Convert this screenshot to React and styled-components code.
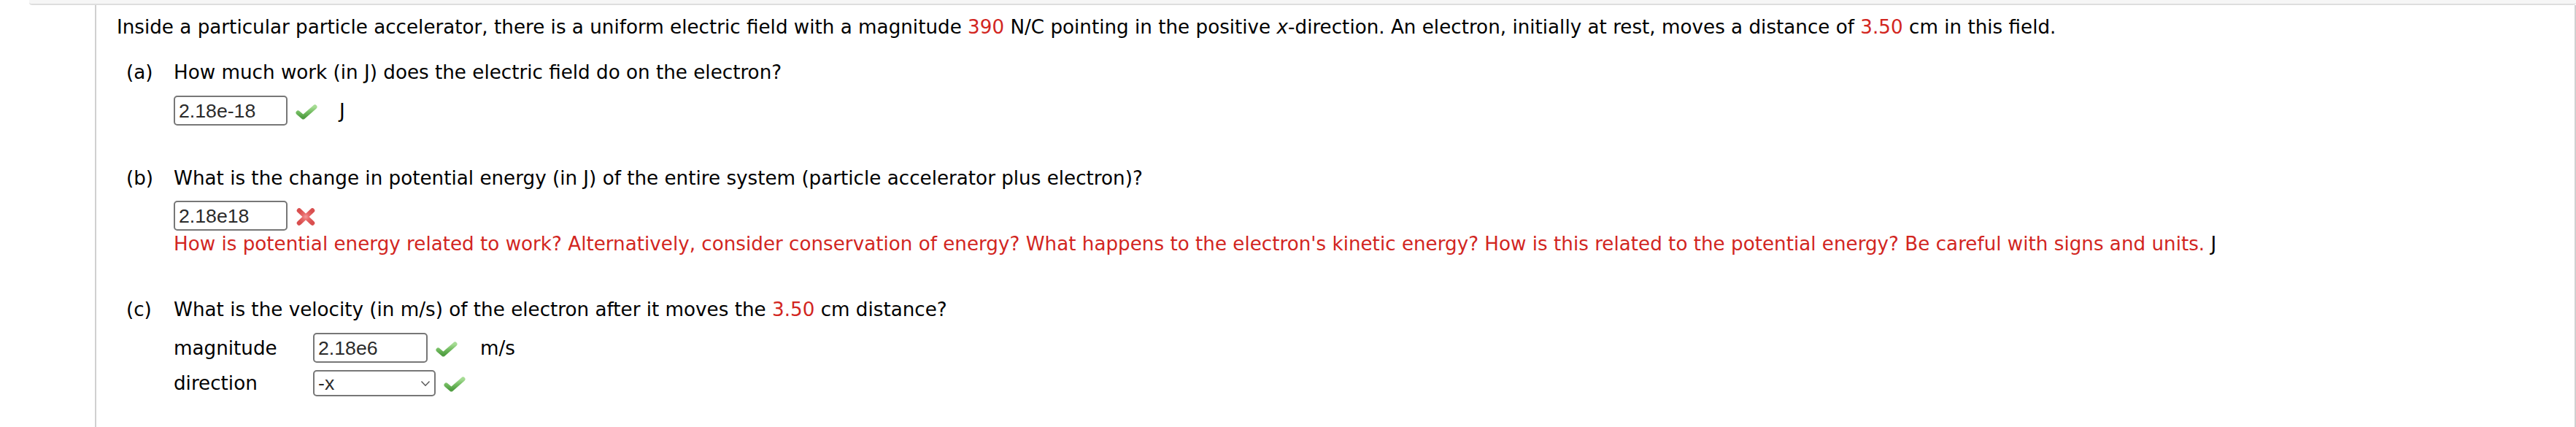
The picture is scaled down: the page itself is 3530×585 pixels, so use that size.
import React from "react";
import styled, { createGlobalStyle } from "styled-components";

const Global = createGlobalStyle`
  html, body { margin: 0; padding: 0; background: #ffffff; }
  body {
    font-family: "DejaVu Sans", Verdana, "Liberation Sans", sans-serif;
    font-size: 26.2px;
    color: #000000;
  }
`;

const Page = styled.div`
  display: flex;
  flex-direction: column;
  min-height: 100vh;
`;

const TopStrip = styled.div`
  margin-left: 40px;
  height: 5px;
  background: #f6f6f6;
  border-bottom: 2px solid #dedede;
  border-radius: 0 0 4px 4px;
`;

const Panel = styled.main`
  flex: 1;
  margin-left: 130px;
  border-left: 2px solid #d0d0d0;
  border-right: 2px solid #d0d0d0;
  padding: 12px 0 0 28px;
`;

const Intro = styled.p`
  margin: 0;
  line-height: 36px;
  white-space: nowrap;
`;

const Given = styled.span`
  color: #d2261f;
`;

const Part = styled.section`
  margin: ${(p) => p.$top}px 0 0 13px;
`;

const Heading = styled.div`
  display: flex;
  line-height: 36px;
  white-space: nowrap;
`;

const PartLabel = styled.span`
  width: 65px;
  flex: none;
`;

const Body = styled.div`
  margin-left: 65px;
`;

const AnswerRow = styled.div`
  display: flex;
  align-items: center;
  margin-top: ${(p) => p.$top}px;
  line-height: 36px;
`;

const Box = styled.div`
  box-sizing: border-box;
  width: ${(p) => p.$w}px;
  height: ${(p) => p.$h}px;
  border: 2px solid #777777;
  border-radius: 5px;
  padding: 0 5px;
  display: flex;
  align-items: center;
  justify-content: space-between;
  font-family: "Liberation Sans", Arial, sans-serif;
  font-size: 26.67px;
  color: #2b2b2b;
  background: #ffffff;
`;

const Mark = styled.span`
  display: inline-flex;
  margin-left: 11px;
  margin-top: 3px;
  margin-right: ${(p) => p.$gapAfter || 0}px;
`;

const Unit = styled.span`
  white-space: nowrap;
`;

const Hint = styled.div`
  color: #d2261f;
  line-height: 36px;
  white-space: nowrap;
`;

const HintUnit = styled.span`
  color: #000000;
`;

const FieldGrid = styled.div`
  display: grid;
  grid-template-columns: 191px auto;
  row-gap: 10px;
  align-items: center;
  margin-top: 14px;
  line-height: 36px;
`;

const FieldLabel = styled.span`
  white-space: nowrap;
`;

const FieldValue = styled.div`
  display: flex;
  align-items: center;
`;

const Check = () => (
  <svg width="30" height="21" viewBox="0 0 30 21">
    <defs>
      <linearGradient id="chk" x1="0" y1="0" x2="0" y2="1">
        <stop offset="0" stopColor="#a6dc94" />
        <stop offset="0.5" stopColor="#74bd62" />
        <stop offset="1" stopColor="#519e42" />
      </linearGradient>
    </defs>
    <path
      d="M3.5 11.5 L10.5 17.5 L26.5 3.5"
      fill="none"
      stroke="url(#chk)"
      strokeWidth="6"
      strokeLinecap="round"
      strokeLinejoin="round"
    />
  </svg>
);

const Cross = () => (
  <svg width="28" height="26" viewBox="0 0 28 26">
    <defs>
      <radialGradient id="crs" cx="0.5" cy="0.5" r="0.6">
        <stop offset="0" stopColor="#f39a9a" />
        <stop offset="0.45" stopColor="#e86a6a" />
        <stop offset="1" stopColor="#d94f4f" />
      </radialGradient>
    </defs>
    <path
      d="M5 4.5 L23 21.5 M23 4.5 L5 21.5"
      fill="none"
      stroke="url(#crs)"
      strokeWidth="6.5"
      strokeLinecap="round"
    />
  </svg>
);

const Chevron = () => (
  <svg width="14" height="9" viewBox="0 0 14 9">
    <path d="M1.5 1.5 L7 7.2 L12.5 1.5" fill="none" stroke="#555" strokeWidth="1.4" />
  </svg>
);

export default function App() {
  return (
    <Page>
      <Global />
      <TopStrip />
      <Panel>
        <Intro>
          Inside a particular particle accelerator, there is a uniform electric field with a
          magnitude <Given>390</Given> N/C pointing in the positive <i>x</i>-direction. An
          electron, initially at rest, moves a distance of <Given>3.50</Given> cm in this field.
        </Intro>

        <Part $top={26}>
          <Heading>
            <PartLabel>(a)</PartLabel>
            <span>How much work (in J) does the electric field do on the electron?</span>
          </Heading>
          <Body>
            <AnswerRow $top={14}>
              <Box $w={156} $h={41}>2.18e-18</Box>
              <Mark $gapAfter={30}>
                <Check />
              </Mark>
              <Unit>J</Unit>
            </AnswerRow>
          </Body>
        </Part>

        <Part $top={54}>
          <Heading>
            <PartLabel>(b)</PartLabel>
            <span>
              What is the change in potential energy (in J) of the entire system (particle
              accelerator plus electron)?
            </span>
          </Heading>
          <Body>
            <AnswerRow $top={13}>
              <Box $w={156} $h={41}>2.18e18</Box>
              <Mark>
                <Cross />
              </Mark>
            </AnswerRow>
            <Hint>
              How is potential energy related to work? Alternatively, consider conservation of
              energy? What happens to the electron's kinetic energy? How is this related to the
              potential energy? Be careful with signs and units. <HintUnit>J</HintUnit>
            </Hint>
          </Body>
        </Part>

        <Part $top={54}>
          <Heading>
            <PartLabel>(c)</PartLabel>
            <span>
              What is the velocity (in m/s) of the electron after it moves the{" "}
              <Given>3.50</Given> cm distance?
            </span>
          </Heading>
          <Body>
            <FieldGrid>
              <FieldLabel>magnitude</FieldLabel>
              <FieldValue>
                <Box $w={157} $h={41}>2.18e6</Box>
                <Mark $gapAfter={31}>
                  <Check />
                </Mark>
                <Unit>m/s</Unit>
              </FieldValue>
              <FieldLabel>direction</FieldLabel>
              <FieldValue>
                <Box $w={168} $h={36}>
                  <span>-x</span>
                  <Chevron />
                </Box>
                <Mark>
                  <Check />
                </Mark>
              </FieldValue>
            </FieldGrid>
          </Body>
        </Part>
      </Panel>
    </Page>
  );
}
